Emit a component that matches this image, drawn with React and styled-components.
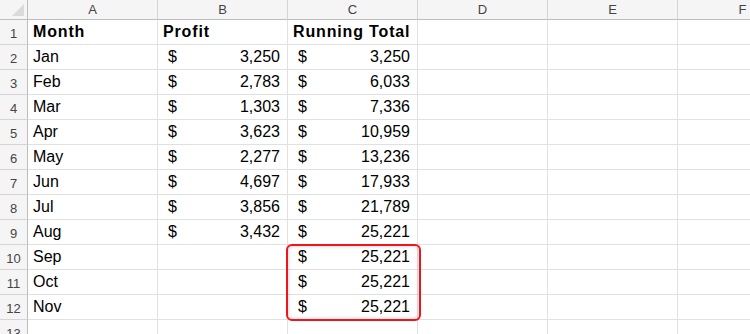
import React from 'react';
import styled, {createGlobalStyle} from "styled-components";

const GlobalStyle = createGlobalStyle`
	html, body {
		margin: 0;
		padding: 0;
		background: #fff;
		overflow: hidden;
	}
`

const COLS = ['A', 'B', 'C', 'D', 'E', 'F']

const rows = [
	['Jan', 3250, 3250],
	['Feb', 2783, 6033],
	['Mar', 1303, 7336],
	['Apr', 3623, 10959],
	['May', 2277, 13236],
	['Jun', 4697, 17933],
	['Jul', 3856, 21789],
	['Aug', 3432, 25221],
	['Sep', null, 25221],
	['Oct', null, 25221],
	['Nov', null, 25221],
]

const fmt = (n) => n.toLocaleString('en-US')

const Sheet = styled.div`
	position: relative;
	width: 750px;
	height: 334px;
	overflow: hidden;
	display: grid;
	grid-template-columns: 28px repeat(6, 130px);
	grid-template-rows: 20px repeat(13, 25px);
	font-family: "Liberation Sans", Arial, sans-serif;
	color: #000;
`

const Corner = styled.div`
	position: relative;
	background: #f5f5f5;
	border-right: 1px solid #bdbdbd;
	border-bottom: 1px solid #bdbdbd;

	&::after {
		content: '';
		position: absolute;
		right: 3px;
		bottom: 3px;
		border-style: solid;
		border-width: 0 0 12px 12px;
		border-color: transparent transparent #dadada transparent;
	}
`

const ColHead = styled.div`
	background: #f5f5f5;
	border-right: 1px solid #d4d4d4;
	border-bottom: 1px solid #bdbdbd;
	display: flex;
	align-items: center;
	justify-content: center;
	font-size: 13px;
	color: #444;
`

const RowHead = styled.div`
	background: #f5f5f5;
	border-right: 1px solid #bdbdbd;
	border-bottom: 1px solid #d4d4d4;
	display: flex;
	align-items: flex-end;
	justify-content: center;
	padding-bottom: 3px;
	box-sizing: border-box;
	font-size: 13px;
	color: #444;
`

const Cell = styled.div`
	border-right: 1px solid #e1e1e1;
	border-bottom: 1px solid #e1e1e1;
	display: flex;
	align-items: flex-end;
	justify-content: space-between;
	padding: 0 7px 2px 5px;
	box-sizing: border-box;
	font-size: 16px;
	font-weight: ${p => p.$bold ? 700 : 400};
	letter-spacing: ${p => p.$bold ? '0.85px' : 'normal'};
	white-space: nowrap;
	line-height: 20px;
`

const Money = styled.span`
	padding-left: 5px;
`

const Highlight = styled.div`
	position: absolute;
	left: 286px;
	top: 244px;
	width: 135px;
	height: 77px;
	box-sizing: border-box;
	border: 2px solid #f0141c;
	border-radius: 6px;
	box-shadow: inset 0 0 4px rgba(0, 0, 0, 0.2);
	pointer-events: none;
`

const Amount = ({value}) => value == null ? null : (
	<>
		<Money>$</Money>
		<span>{fmt(value)}</span>
	</>
)

const App = () => {
	return (
		<>
			<GlobalStyle/>
			<Sheet>
				<Corner/>
				{COLS.map(c => <ColHead key={c}>{c}</ColHead>)}

				<RowHead>1</RowHead>
				<Cell $bold>Month</Cell>
				<Cell $bold>Profit</Cell>
				<Cell $bold>Running Total</Cell>
				<Cell/><Cell/><Cell/>

				{rows.map(([m, p, t], i) => (
					<React.Fragment key={m}>
						<RowHead>{i + 2}</RowHead>
						<Cell>{m}</Cell>
						<Cell><Amount value={p}/></Cell>
						<Cell><Amount value={t}/></Cell>
						<Cell/><Cell/><Cell/>
					</React.Fragment>
				))}

				<RowHead>13</RowHead>
				<Cell/><Cell/><Cell/><Cell/><Cell/><Cell/>

				<Highlight/>
			</Sheet>
		</>
	);
};

export default App;
